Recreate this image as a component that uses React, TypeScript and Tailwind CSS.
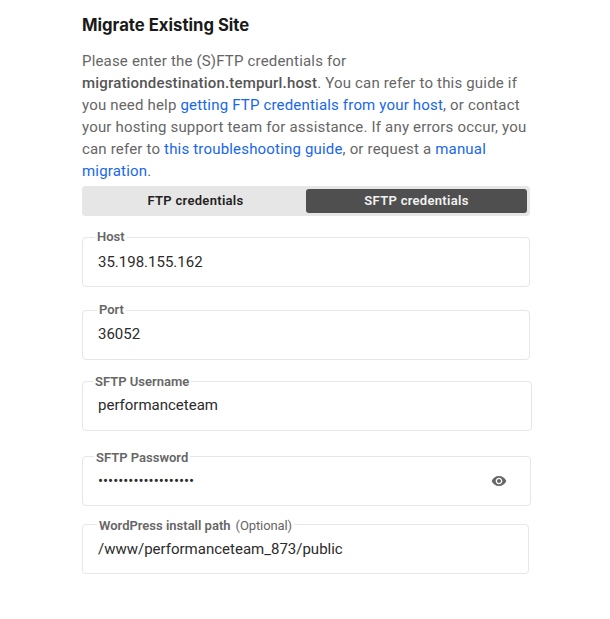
import React from "react";

function Field({ label, value, legendClass, boxClass, valueClass, optional, children }: {
  label: string; value: string; legendClass: string; boxClass: string; valueClass?: string; optional?: boolean; children?: React.ReactNode;
}) {
  return (
    <fieldset className={`h-[58px] rounded-[4px] border border-[#e6e6e6] flex-none ${boxClass}`}>
      <legend className={`h-[16px] text-[13px] leading-[16px] font-semibold text-[#666666] whitespace-nowrap px-[2px] ${legendClass}`}>
        {label}
        {optional && <span className="ml-[5px] font-normal tracking-[-0.1px]">(Optional)</span>}
      </legend>
      <div className={`flex items-center justify-between text-[15px] leading-[24px] text-[#2b2b2b] ${valueClass ?? ""}`}>
        <span className="whitespace-pre">{value}</span>
        {children}
      </div>
    </fieldset>
  );
}

export default function App() {
  return (
    <div className="w-[610px] h-[619px] bg-white overflow-hidden pl-[82px] pt-[14px] font-['Roboto',sans-serif]">
      <h1 className="font-['Inter',sans-serif] text-[16.7px] leading-[22px] font-bold text-[#1a1a1a]">Migrate Existing Site</h1>
      <p className="w-[448px] mt-[14px] text-[15px] leading-[22px] tracking-[0.18px] text-[#666666]">
        Please enter the (S)FTP credentials for{" "}
        <span className="font-medium text-[#555555]">migrationdestination.tempurl.host</span>. You can refer to this guide if you need help{" "}
        <a className="text-[#1766f0]">getting FTP credentials from your host</a>, or contact your hosting support team for assistance. If any errors occur, you can refer to{" "}
        <a className="text-[#1766f0]">this troubleshooting guide</a>, or request a{" "}
        <a className="text-[#1766f0]">manual migration</a>.
      </p>
      <div className="w-[448px] h-[30px] mt-[4px] p-[3px] rounded-[4px] bg-[#e6e6e6] flex">
        <div className="w-[221px] flex items-center justify-center text-[13px] font-semibold tracking-[0.3px] text-[#222222]">FTP credentials</div>
        <div className="flex-1 flex items-center justify-center rounded-[3px] bg-[#4f4f4f] text-[13px] font-semibold tracking-[0.3px] text-[#f2f2f2]">SFTP credentials</div>
      </div>
      <div className="mt-[13px] flex flex-col">
        <Field label="Host" value="35.198.155.162" boxClass="w-[448px]" legendClass="ml-[12px]" valueClass="pl-[15px] pt-[5px]" />
        <Field label="Port" value="36052" boxClass="w-[448px] mt-[15px]" legendClass="ml-[14px]" valueClass="pl-[15px] pt-[4px]" />
        <Field label="SFTP Username" value="performanceteam" boxClass="w-[450px] mt-[13px]" legendClass="ml-[10px] translate-y-[1px]" valueClass="pl-[15px] pt-[4px]" />
        <Field label="SFTP Password" value="•••••••••••••••••••" boxClass="w-[449px] mt-[17px]" legendClass="ml-[11px] translate-y-[2px]" valueClass="pl-[15px] pr-[23px] pt-[5px]">
          <svg width="16" height="16" viewBox="0 0 24 24" fill="#666666">
            <path d="M12 4.5C7 4.5 2.73 7.61 1 12c1.73 4.39 6 7.5 11 7.5s9.27-3.11 11-7.5c-1.73-4.39-6-7.5-11-7.5zM12 17c-2.76 0-5-2.24-5-5s2.24-5 5-5 5 2.24 5 5-2.24 5-5 5zm0-8c-1.66 0-3 1.34-3 3s1.34 3 3 3 3-1.34 3-3-1.34-3-3-3z" />
          </svg>
        </Field>
        <Field label="WordPress install path" optional value="/www/performanceteam_873/public" boxClass="w-[447px] mt-[10px]" legendClass="ml-[14px] translate-y-[2px]" valueClass="pl-[15px] pt-[5px]" />
      </div>
    </div>
  );
}
